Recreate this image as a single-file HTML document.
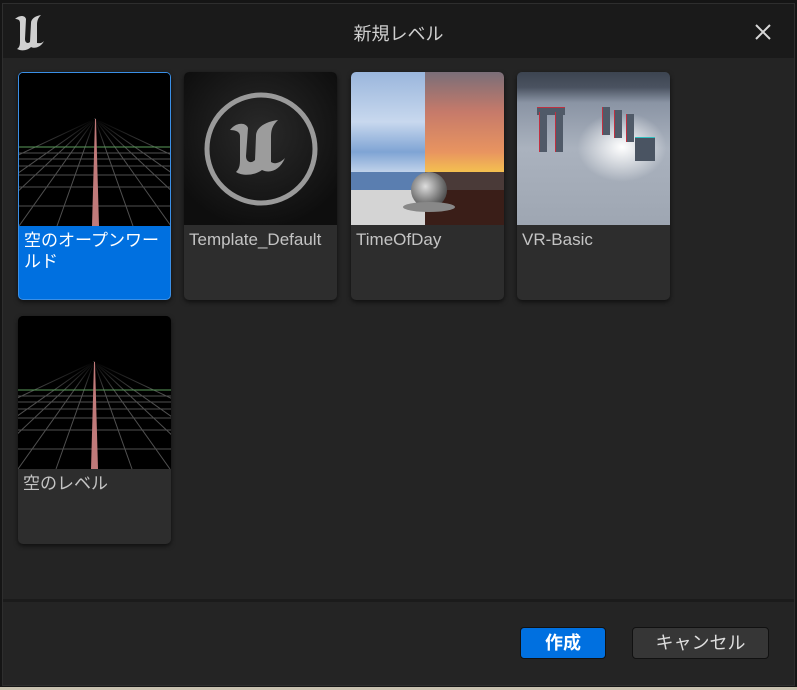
<!DOCTYPE html>
<html><head><meta charset="utf-8"><style>
*{margin:0;padding:0;box-sizing:border-box}
body{width:797px;height:690px;background:#151515;position:relative;overflow:hidden;font-family:"Liberation Sans","Noto Sans CJK JP",sans-serif}
.strip{position:absolute;left:0;top:687px;width:797px;height:3px;background:#c9c2b0}
.dlg{position:absolute;left:2px;top:3px;width:793px;height:683px;background:#242424;border:1px solid #2e2e2e}
.title{position:absolute;left:0;top:0;width:791px;height:54px;background:#1a1a1a}
.title .t{position:absolute;left:0;width:100%;top:16px;text-align:center;color:#cfcfcf;font-size:18px}
.card{position:absolute;width:153px;height:228px;background:#2d2d2d;border-radius:5px;overflow:hidden;box-shadow:0 2px 5px rgba(0,0,0,.6)}
.card .img{position:absolute;left:0;top:0;width:153px;height:153px;background:#000}
.card .lb{position:absolute;left:5px;top:157px;right:2px;color:#c4c4c4;font-size:17px;line-height:21px}
.sel{background:#0070e0;border:1px solid #3a8fe6}
.sel .lb{color:#fff}
.sep{position:absolute;width:791px;height:3px;background:#1b1b1b}
.btn{position:absolute;border-radius:4px;text-align:center;font-size:18px;line-height:30px}
</style></head><body>
<div class="strip"></div>
<div class="dlg">
<div class="title">
<svg style="position:absolute;left:8px;top:9px" width="36" height="40" viewBox="0 0 36 40"><path d="M4 6 C8 2 14 2 15 6 L14 26 C14 30 17 31 19 29 L20 10 C20 6 24 3 30 2 C27 5 26 8 26 12 L26 30 C28 30 30 31 33 28 C30 34 24 36 20 34 C16 38 10 38 6 36 C9 34 9 31 9 28 L9 10 C9 7 7 6 4 6Z" fill="#cfcfcf"/></svg>
<div class="t">新規レベル</div>
<svg style="position:absolute;left:751px;top:19px" width="18" height="18" viewBox="0 0 18 18"><path d="M2 2L16 16M16 2L2 16" stroke="#d8d8d8" stroke-width="2"/></svg>
</div>
</div>

<svg width="0" height="0" style="position:absolute"><defs>
<linearGradient id="fade" x1="0" y1="0" x2="0" y2="1"><stop offset="0" stop-color="#000" stop-opacity="1"/><stop offset="1" stop-color="#000" stop-opacity="0"/></linearGradient>
<g id="grid">
<rect width="153" height="153" fill="#000"/>
<g stroke="#505050" stroke-width="1">
<line x1="0" y1="80" x2="153" y2="80"/><line x1="0" y1="86" x2="153" y2="86"/><line x1="0" y1="93" x2="153" y2="93"/><line x1="0" y1="102" x2="153" y2="102"/><line x1="0" y1="114" x2="153" y2="114"/><line x1="0" y1="133" x2="153" y2="133"/>
<line x1="76" y1="46" x2="-38" y2="153"/><line x1="76" y1="46" x2="0" y2="153"/><line x1="76" y1="46" x2="-76" y2="153"/><line x1="76" y1="46" x2="-152" y2="153"/>
<line x1="76" y1="46" x2="38" y2="153"/><line x1="76" y1="46" x2="114" y2="153"/><line x1="76" y1="46" x2="152" y2="153"/><line x1="76" y1="46" x2="190" y2="153"/><line x1="76" y1="46" x2="228" y2="153"/><line x1="76" y1="46" x2="304" y2="153"/>
</g>
<rect x="0" y="46" width="153" height="32" fill="url(#fade)"/>
<line x1="0" y1="74" x2="153" y2="74" stroke="#5a9a5a"/>
<polygon points="76,46 77,46 80,153 73,153" fill="#c07a7a"/>
</g></defs></svg>

<div class="card sel" style="left:18px;top:72px"><svg class="img" viewBox="0 0 153 153"><use href="#grid"/></svg><div class="lb">空のオープンワールド</div></div>

<div class="card" style="left:184px;top:72px"><div class="img" style="background:radial-gradient(circle at 50% 40%,#2a2a2a,#0e0e0e 80%)">
<svg width="153" height="153" viewBox="0 0 153 153"><circle cx="77" cy="77" r="54" fill="none" stroke="#9a9a9a" stroke-width="5"/><path d="M46 58 C52 50 62 50 64 56 L62 84 C62 90 67 92 71 88 L72 64 C72 56 80 50 94 48 C88 54 87 58 87 66 L87 90 C90 92 95 92 101 86 C96 98 86 102 78 98 C70 104 58 104 52 100 C56 96 56 92 56 86 L56 64 C56 60 52 58 46 58Z" fill="#9c9c9c"/></svg></div><div class="lb">Template_Default</div></div>

<div class="card" style="left:351px;top:72px"><div class="img">
<div style="position:absolute;left:0;top:0;width:74px;height:100px;background:linear-gradient(180deg,#9ab6dc,#c8d8ee 50%,#7fa4d4 80%,#c0d2ea)"></div>
<div style="position:absolute;left:74px;top:0;width:79px;height:100px;background:linear-gradient(180deg,#7a6e78,#c67a6a 40%,#e89460 80%,#f4c050 100%)"></div>
<div style="position:absolute;left:0;top:100px;width:74px;height:18px;background:#5a7eb0"></div>
<div style="position:absolute;left:74px;top:100px;width:79px;height:18px;background:#4a3a38"></div>
<div style="position:absolute;left:0;top:118px;width:74px;height:35px;background:#d4d4d4"></div>
<div style="position:absolute;left:74px;top:118px;width:79px;height:35px;background:#3a1e18"></div>
<div style="position:absolute;left:60px;top:100px;width:36px;height:36px;border-radius:50%;background:radial-gradient(circle at 40% 40%,#ddd,#555 70%,#222)"></div>
<div style="position:absolute;left:52px;top:130px;width:52px;height:10px;border-radius:50%;background:#888"></div>
</div><div class="lb">TimeOfDay</div></div>

<div class="card" style="left:517px;top:72px"><div class="img" style="background:linear-gradient(180deg,#3c4450 0%,#4a5260 10%,#8a94a4 20%,#aab2be 50%,#9ea6b2 100%)">
<div style="position:absolute;left:60px;top:40px;width:90px;height:70px;border-radius:50%;background:radial-gradient(#fff,rgba(255,255,255,0) 70%)"></div>
<div style="position:absolute;left:20px;top:35px;width:28px;height:8px;background:#505a68;border-top:1px solid #c03040"></div>
<div style="position:absolute;left:22px;top:40px;width:8px;height:40px;background:#505a68;border-left:1px solid #c03040"></div>
<div style="position:absolute;left:38px;top:40px;width:8px;height:40px;background:#505a68;border-left:1px solid #c03040"></div>
<div style="position:absolute;left:85px;top:35px;width:8px;height:28px;background:#505a68;border-left:1px solid #c03040"></div>
<div style="position:absolute;left:97px;top:38px;width:8px;height:28px;background:#505a68;border-left:1px solid #c03040"></div>
<div style="position:absolute;left:109px;top:42px;width:8px;height:28px;background:#505a68;border-left:1px solid #c03040"></div>
<div style="position:absolute;left:118px;top:65px;width:20px;height:24px;background:#4a5462;border-top:1px solid #30c0c0"></div>
</div><div class="lb">VR-Basic</div></div>

<div class="card" style="left:18px;top:316px"><svg class="img" viewBox="0 0 153 153"><use href="#grid"/></svg><div class="lb">空のレベル</div></div>

<div class="sep" style="left:3px;top:599px"></div>
<div class="btn" style="left:520px;top:627px;width:86px;height:32px;background:#0070e0;border:1px solid #111;color:#fff;font-weight:bold">作成</div>
<div class="btn" style="left:632px;top:627px;width:137px;height:32px;background:#363636;border:1px solid #111;color:#ddd">キャンセル</div>
</body></html>
